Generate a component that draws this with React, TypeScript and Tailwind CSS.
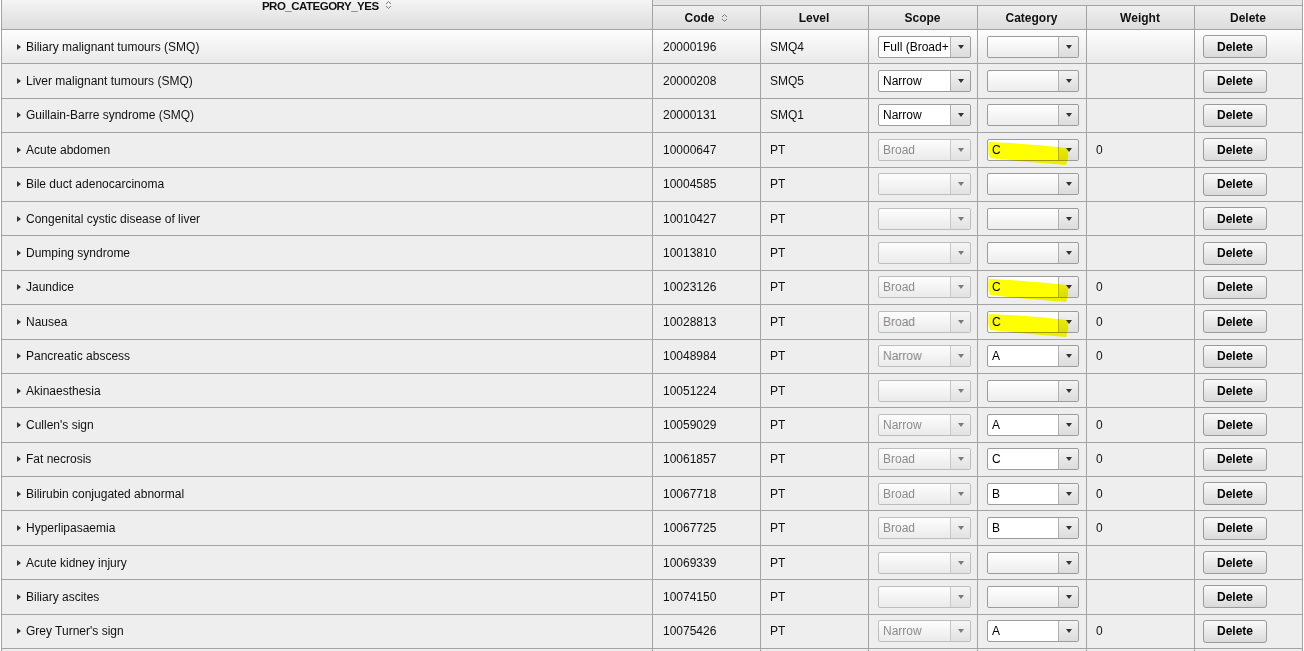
import React from "react";

type Row = {
  name: string;
  code: string;
  level: string;
  scope: string;
  scopeOn?: boolean;
  cat: string;
  mark?: boolean;
  weight?: string;
};

const rows: Row[] = [
  { name: "Biliary malignant tumours (SMQ)", code: "20000196", level: "SMQ4", scope: "Full (Broad+", scopeOn: true, cat: "" },
  { name: "Liver malignant tumours (SMQ)", code: "20000208", level: "SMQ5", scope: "Narrow", scopeOn: true, cat: "" },
  { name: "Guillain-Barre syndrome (SMQ)", code: "20000131", level: "SMQ1", scope: "Narrow", scopeOn: true, cat: "" },
  { name: "Acute abdomen", code: "10000647", level: "PT", scope: "Broad", cat: "C", mark: true, weight: "0" },
  { name: "Bile duct adenocarcinoma", code: "10004585", level: "PT", scope: "", cat: "" },
  { name: "Congenital cystic disease of liver", code: "10010427", level: "PT", scope: "", cat: "" },
  { name: "Dumping syndrome", code: "10013810", level: "PT", scope: "", cat: "" },
  { name: "Jaundice", code: "10023126", level: "PT", scope: "Broad", cat: "C", mark: true, weight: "0" },
  { name: "Nausea", code: "10028813", level: "PT", scope: "Broad", cat: "C", mark: true, weight: "0" },
  { name: "Pancreatic abscess", code: "10048984", level: "PT", scope: "Narrow", cat: "A", weight: "0" },
  { name: "Akinaesthesia", code: "10051224", level: "PT", scope: "", cat: "" },
  { name: "Cullen's sign", code: "10059029", level: "PT", scope: "Narrow", cat: "A", weight: "0" },
  { name: "Fat necrosis", code: "10061857", level: "PT", scope: "Broad", cat: "C", weight: "0" },
  { name: "Bilirubin conjugated abnormal", code: "10067718", level: "PT", scope: "Broad", cat: "B", weight: "0" },
  { name: "Hyperlipasaemia", code: "10067725", level: "PT", scope: "Broad", cat: "B", weight: "0" },
  { name: "Acute kidney injury", code: "10069339", level: "PT", scope: "", cat: "" },
  { name: "Biliary ascites", code: "10074150", level: "PT", scope: "", cat: "" },
  { name: "Grey Turner's sign", code: "10075426", level: "PT", scope: "Narrow", cat: "A", weight: "0" },
];

const SortIcon = () => (
  <svg width="7" height="10" viewBox="0 0 7 10" className="ml-[6px] inline-block">
    <path d="M1 4 L3.5 1.5 L6 4" fill="none" stroke="#777" strokeWidth="1" />
    <path d="M1 6 L3.5 8.5 L6 6" fill="none" stroke="#777" strokeWidth="1" />
  </svg>
);

const Caret = () => (
  <span className="mr-[5px] inline-block h-0 w-0 border-y-[3.5px] border-l-[4px] border-y-transparent border-l-[#333]" />
);

function Dropdown({
  value,
  enabled,
  mark,
  width,
}: {
  value: string;
  enabled: boolean;
  mark?: boolean;
  width: string;
}) {
  const face = enabled
    ? value
      ? "bg-white text-black"
      : "bg-gradient-to-b from-white to-[#ededed] text-black"
    : "bg-gradient-to-b from-[#fdfdfd] to-[#ebebeb] text-[#8c8c8c]";
  return (
    <div
      className={`relative flex h-[22px] ${width} rounded-[2px] border ${
        enabled ? "border-[#9c9c9c]" : "border-[#bdbdbd]"
      }`}
    >
      <div className={`flex flex-1 items-center rounded-l-[2px] pl-[4px] ${face}`}>{value}</div>
      <div
        className={`flex w-[20px] items-center justify-center rounded-r-[2px] border-l ${
          enabled
            ? "border-[#b0b0b0] bg-gradient-to-b from-[#f3f3f3] to-[#dcdcdc]"
            : "border-[#c8c8c8] bg-gradient-to-b from-[#f5f5f5] to-[#e2e2e2]"
        }`}
      >
        <span
          className={`h-0 w-0 border-x-[3px] border-t-[4px] border-x-transparent ${
            enabled ? "border-t-[#333]" : "border-t-[#7a7a7a]"
          }`}
        />
      </div>
      {mark && (
        <svg
          width="82"
          height="26"
          viewBox="0 0 82 26"
          className="pointer-events-none absolute left-0 top-[1px] mix-blend-multiply"
        >
          <path
            d="M1 1 C 25 2, 55 4, 79 7 C 81 12, 80 19, 78 24 C 55 22, 28 20, 2 17 C 0 11, 0 6, 1 1 Z"
            fill="#ffff00"
          />
        </svg>
      )}
    </div>
  );
}

const DeleteButton = () => (
  <button className="flex h-[23px] w-[64px] items-center justify-center rounded-[3px] border border-[#9a9a9a] bg-gradient-to-b from-[#fafafa] to-[#dadada] text-[12px] font-bold text-black">
    Delete
  </button>
);

const cell = "flex h-full items-center border-l border-[#a3a3a3]";

export default function App() {
  return (
    <div
      className="h-[651px] w-[1304px] overflow-hidden bg-white pl-[1px] text-[12px] text-[#111]"
      style={{ fontFamily: '"Liberation Sans", Arial, sans-serif' }}
    >
      <div className="w-[1302px] border-r border-[#a3a3a3]">
        {/* header */}
        <div className="flex h-[30px] border-b border-[#a3a3a3] bg-gradient-to-b from-[#f4f4f4] to-[#dddddd]">
          <div className="flex w-[651px] items-start justify-center border-l border-[#a3a3a3]">
            <span className="text-[11.5px] font-bold leading-[12px] tracking-[-0.5px] text-[#111]">
              PRO_CATEGORY_YES
            </span>
            <SortIcon />
          </div>
          <div className="flex w-[651px] flex-col">
            <div className="h-[6px] border-b border-l border-[#a3a3a3] bg-[#e6e6e6]" />
            <div className="flex flex-1 font-bold">
              <div className={`${cell} w-[108px] justify-center`}>
                Code
                <SortIcon />
              </div>
              <div className={`${cell} w-[108px] justify-center`}>Level</div>
              <div className={`${cell} w-[109px] justify-center`}>Scope</div>
              <div className={`${cell} w-[109px] justify-center`}>Category</div>
              <div className={`${cell} w-[108px] justify-center`}>Weight</div>
              <div className={`${cell} w-[108px] justify-center`}>Delete</div>
            </div>
          </div>
        </div>

        {/* rows */}
        {rows.map((r, i) => (
          <div
            key={r.code}
            className={`flex h-[34.4px] border-b border-[#a3a3a3] ${
              i === 0 ? "bg-gradient-to-b from-[#fdfdfd] to-[#e9e9e9]" : "bg-[#eeeeee]"
            }`}
          >
            <div className={`${cell} w-[651px] pl-[15px]`}>
              <Caret />
              {r.name}
            </div>
            <div className={`${cell} w-[108px] pl-[10px]`}>{r.code}</div>
            <div className={`${cell} w-[108px] pl-[9px]`}>{r.level}</div>
            <div className={`${cell} w-[109px] pl-[9px]`}>
              <Dropdown value={r.scope} enabled={!!r.scopeOn} width="w-[93px]" />
            </div>
            <div className={`${cell} w-[109px] pl-[9px]`}>
              <Dropdown value={r.cat} enabled mark={r.mark} width="w-[92px]" />
            </div>
            <div className={`${cell} w-[108px] pl-[9px]`}>{r.weight ?? ""}</div>
            <div className={`${cell} w-[108px] pl-[8px]`}>
              <DeleteButton />
            </div>
          </div>
        ))}
        <div className="flex h-[34px] bg-[#eeeeee]">
          <div className={`${cell} w-[651px]`} />
          <div className={`${cell} w-[108px]`} />
          <div className={`${cell} w-[108px]`} />
          <div className={`${cell} w-[109px]`} />
          <div className={`${cell} w-[109px]`} />
          <div className={`${cell} w-[108px]`} />
          <div className={`${cell} w-[108px]`} />
        </div>
      </div>
    </div>
  );
}
